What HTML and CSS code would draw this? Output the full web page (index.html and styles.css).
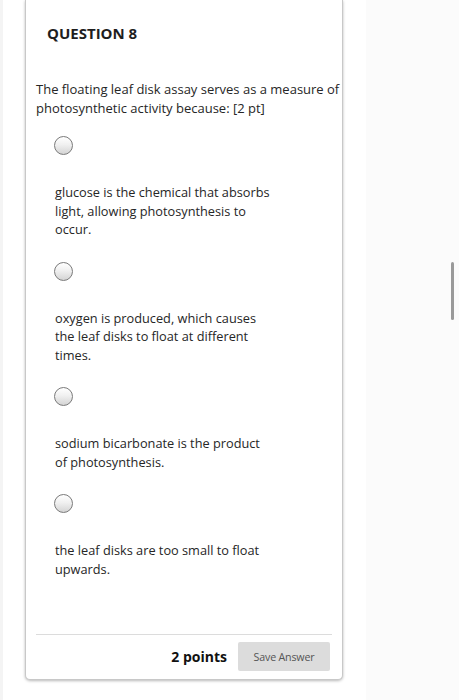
FILE: index.html
```html
<!DOCTYPE html>
<html lang="en">
<head>
<meta charset="utf-8">
<title>Question 8</title>
<link rel="stylesheet" href="styles.css">
</head>
<body>
<div class="page">
  <div class="edge"></div>
  <main class="card">
    <h2 class="q-title">QUESTION 8</h2>
    <p class="q-text">The floating leaf disk assay serves as a measure of photosynthetic activity because: [2 pt]</p>
    <ul class="options">
      <li class="option">
        <span class="radio"></span>
        <p class="opt-text">glucose is the chemical that absorbs light, allowing photosynthesis to occur.</p>
      </li>
      <li class="option">
        <span class="radio"></span>
        <p class="opt-text">oxygen is produced, which causes the leaf disks to float at different times.</p>
      </li>
      <li class="option">
        <span class="radio"></span>
        <p class="opt-text">sodium bicarbonate is the product of photosynthesis.</p>
      </li>
      <li class="option">
        <span class="radio"></span>
        <p class="opt-text">the leaf disks are too small to float upwards.</p>
      </li>
    </ul>
    <div class="footer">
      <span class="points">2 points</span>
      <button class="save">Save Answer</button>
    </div>
  </main>
  <aside class="side"></aside>
</div>
<div class="scrollbar"></div>
</body>
</html>
```

FILE: styles.css
```css
html, body {
  margin: 0;
  padding: 0;
  background: #ffffff;
}

body {
  font-family: "Open Sans", "Liberation Sans", sans-serif;
  color: #262626;
  width: 459px;
  height: 700px;
  overflow: hidden;
}

.page {
  display: flex;
  align-items: flex-start;
  height: 700px;
}

.edge {
  width: 3px;
  height: 700px;
  background: #f4f4f4;
  margin-right: 22px;
  flex: none;
}

.card {
  width: 296px;
  flex: none;
  border: 1px solid #c8c8c8;
  border-top: none;
  border-radius: 0 0 5px 5px;
  box-shadow: 0 1px 3px rgba(0, 0, 0, 0.28);
  padding: 0 10px 8px;
  background: #fff;
}

.q-title {
  margin: 23px 0 0 11px;
  font-size: 15px;
  line-height: 20px;
  font-weight: 700;
  color: #1e1e1e;
}

.q-text {
  margin: 37px -9px 0 0;
  font-size: 13px;
  line-height: 18.5px;
}

.options {
  list-style: none;
  margin: 19px 0 0;
  padding: 0;
}

.option {
  padding-left: 17px;
  padding-bottom: 23px;
}

.option:last-child {
  padding-bottom: 56px;
}

.radio {
  display: block;
  width: 17px;
  height: 17px;
  margin-left: 1px;
  border: 1px solid #7a7a7a;
  border-radius: 50%;
  background: linear-gradient(#ffffff 0%, #f0f0f0 45%, #d4d4d4 100%);
}

.opt-text {
  margin: 28px 0 0 2px;
  width: 216px;
  font-size: 12.75px;
  line-height: 18.5px;
}

.footer {
  border-top: 1px solid #dcdcdc;
  display: flex;
  justify-content: flex-end;
  align-items: center;
  gap: 11px;
  padding: 7px 2px 0 0;
}

.points {
  font-size: 14px;
  font-weight: 700;
  color: #111;
}

.save {
  width: 92px;
  height: 29px;
  border: none;
  border-radius: 2px;
  background: #dcdcdc;
  color: #555;
  font-family: "Open Sans", "Liberation Sans", sans-serif;
  font-size: 10.7px;
  letter-spacing: -0.2px;
  padding: 0;
}

.side {
  margin-left: 23px;
  flex: 1;
  height: 700px;
  background: #fbfbfb;
}

.scrollbar {
  position: absolute;
  left: 451px;
  top: 262px;
  width: 3px;
  height: 58px;
  border-radius: 2px;
  background: #9a9a9a;
}
```
